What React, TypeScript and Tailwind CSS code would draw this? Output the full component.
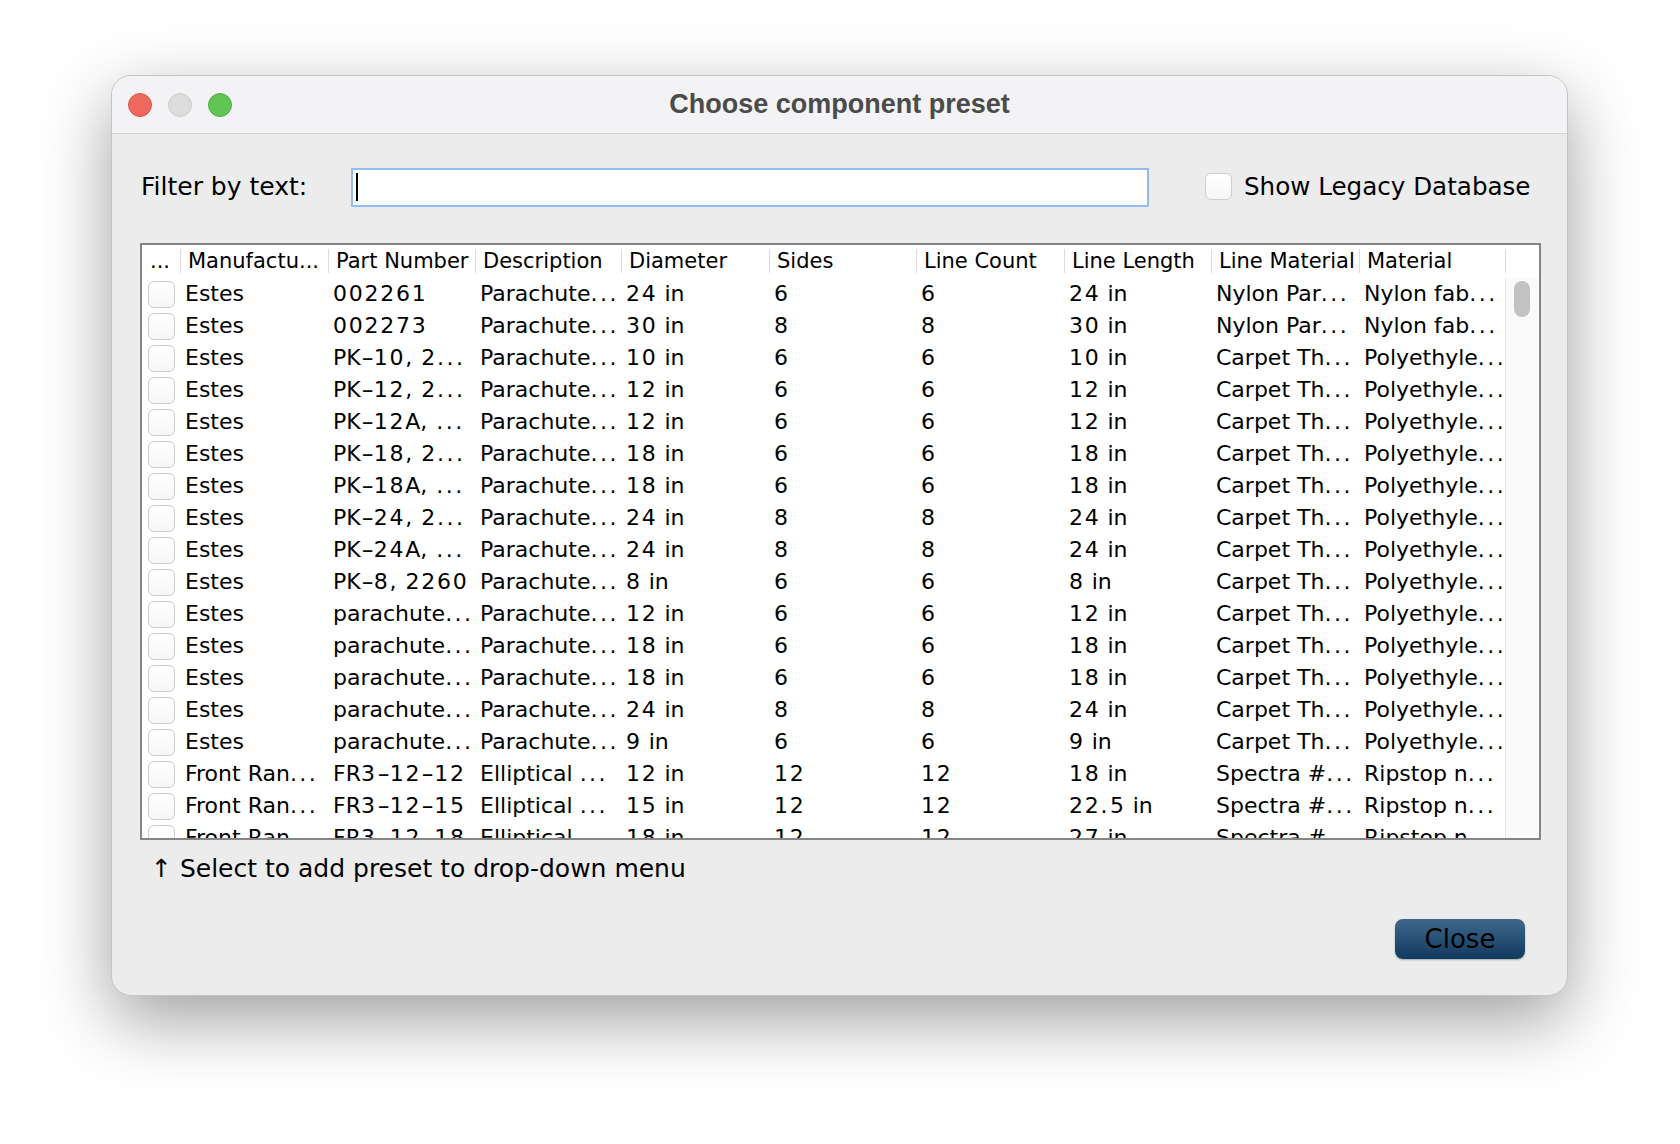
const COLS = [38, 148, 147, 146, 148, 147, 148, 147, 148, 146];

const HEADERS = ['...', 'Manufactu...', 'Part Number', 'Description', 'Diameter', 'Sides', 'Line Count', 'Line Length', 'Line Material', 'Material'];

type Row = string[];

const estes = (pn: string, d: string, s: string, len: string, mat = ['Carpet Th...', 'Polyethyle...']): Row => [
    'Estes', pn, 'Parachute...', d, s, s, len, mat[0], mat[1],
];

const front = (pn: string, d: string, len: string): Row => [
    'Front Ran...', pn, 'Elliptical ...', d, '12', '12', len, 'Spectra #...', 'Ripstop n...',
];

const ROWS: Row[] = [
    estes('002261', '24 in', '6', '24 in', ['Nylon Par...', 'Nylon fab...']),
    estes('002273', '30 in', '8', '30 in', ['Nylon Par...', 'Nylon fab...']),
    estes('PK-10, 2...', '10 in', '6', '10 in'),
    estes('PK-12, 2...', '12 in', '6', '12 in'),
    estes('PK-12A, ...', '12 in', '6', '12 in'),
    estes('PK-18, 2...', '18 in', '6', '18 in'),
    estes('PK-18A, ...', '18 in', '6', '18 in'),
    estes('PK-24, 2...', '24 in', '8', '24 in'),
    estes('PK-24A, ...', '24 in', '8', '24 in'),
    estes('PK-8, 2260', '8 in', '6', '8 in'),
    estes('parachute...', '12 in', '6', '12 in'),
    estes('parachute...', '18 in', '6', '18 in'),
    estes('parachute...', '18 in', '6', '18 in'),
    estes('parachute...', '24 in', '8', '24 in'),
    estes('parachute...', '9 in', '6', '9 in'),
    front('FR3-12-12', '12 in', '18 in'),
    front('FR3-12-15', '15 in', '22.5 in'),
    front('FR3-12-18', '18 in', '27 in'),
];

// the mac font sets digits, dots and dashes wider than DejaVu does
const Cell = ({ text }: { text: string }) => (
    <>
        {text
            .split(/([0-9]+|\.+|-|,)/)
            .filter(Boolean)
            .map((p, i) => {
                if (/^[0-9]+$/.test(p)) return <span key={i} className="tracking-[1.75px]">{p}</span>;
                if (/^\.+$/.test(p)) return <span key={i} className="tracking-[2.5px]">{p}</span>;
                if (p === '-') return <span key={i} className="inline-block w-[13px] text-center scale-x-[1.6]">{p}</span>;
                if (p === ',') return <span key={i} className="tracking-[2px]">{p}</span>;
                return <span key={i}>{p}</span>;
            })}
    </>
);

const Checkbox = () => (
    <div className="w-[27px] h-[27px] rounded-[6px] border border-[#cdcdcd] bg-gradient-to-b from-white to-[#f6f6f6] shrink-0" />
);

const TrafficLights = () => (
    <div className="flex items-center gap-[16px] pl-[16px]">
        <div className="w-[24px] h-[24px] rounded-full bg-[#ee6a5f] border border-[#d95a50]" />
        <div className="w-[24px] h-[24px] rounded-full bg-[#dcdcdc] border border-[#cbcbcb]" />
        <div className="w-[24px] h-[24px] rounded-full bg-[#61c554] border border-[#52ad46]" />
    </div>
);

const TableHeader = () => (
    <div className="flex h-[33px] bg-white shrink-0 text-[21px]">
        {HEADERS.map((h, i) => (
            <div key={i} className="flex items-center h-full shrink-0" style={{ width: COLS[i] }}>
                {i > 0 && <div className="w-px h-[24px] bg-[#dcdcdc] mt-[-2px]" />}
                <span className={`${i === 0 ? 'pl-[8px]' : 'pl-[7px]'} whitespace-nowrap`}>{h}</span>
            </div>
        ))}
        <div className="flex items-center flex-1">
            <div className="w-px h-[24px] bg-[#dcdcdc] mt-[-2px]" />
        </div>
    </div>
);

const TableRow = ({ row }: { row: Row }) => (
    <div className="flex h-[32px] items-center shrink-0 text-[22px]">
        <div className="flex items-center pl-[6px] shrink-0" style={{ width: COLS[0] }}>
            <Checkbox />
        </div>
        {row.map((c, i) => (
            <div key={i} className="pl-[5px] whitespace-nowrap shrink-0 leading-[32px]" style={{ width: COLS[i + 1] }}>
                <Cell text={c} />
            </div>
        ))}
    </div>
);

export default function App() {
    return (
        <div className="min-h-[1144px] w-[1680px] bg-white pt-[75px] pl-[111px]" style={{ fontFamily: '"DejaVu Sans", sans-serif' }}>
            <div className="w-[1457px] h-[921px] rounded-[20px] bg-[#ececec] overflow-hidden flex flex-col border border-[#c4c4c4] shadow-[0_24px_70px_rgba(0,0,0,0.38)]">
                {/* title bar */}
                <div className="relative h-[58px] shrink-0 bg-[#f3f3f5] border-b border-[#d2d2d2] flex items-center">
                    <TrafficLights />
                    <div className="absolute inset-0 flex items-center justify-center text-[27px] font-bold text-[#4b4b4b]" style={{ fontFamily: '"Liberation Sans", Arial, sans-serif' }}>
                        Choose component preset
                    </div>
                </div>

                {/* body */}
                <div className="flex-1 flex flex-col px-[28px] pt-[33px] text-black">
                    <div className="flex items-center h-[40px] text-[25px]">
                        <span className="w-[211px] pl-[1px] shrink-0">Filter by text:</span>
                        <div className="w-[798px] h-[39px] bg-white border-2 border-[#93bdf2] flex items-center pl-[3px] shrink-0">
                            <div className="w-[2px] h-[28px] bg-black" />
                        </div>
                        <div className="flex items-center ml-[56px] gap-[12px]">
                            <Checkbox />
                            <span className="whitespace-nowrap text-[24.6px]">Show Legacy Database</span>
                        </div>
                    </div>

                    <div className="mt-[36px] w-[1401px] h-[597px] border-2 border-[#858585] bg-white flex flex-col overflow-hidden">
                        <TableHeader />
                        <div className="flex flex-1 overflow-hidden">
                            <div className="flex flex-col overflow-hidden w-[1363px] shrink-0">
                                {ROWS.map((r, i) => (
                                    <TableRow key={i} row={r} />
                                ))}
                            </div>
                            <div className="flex-1 bg-[#fafafa] border-l border-[#e6e6e6] pt-[3px] pl-[8px]">
                                <div className="w-[16px] h-[36px] rounded-full bg-[#c2c2c2]" />
                            </div>
                        </div>
                    </div>

                    <div className="mt-[14px] pl-[11px] text-[25px] leading-[30px]">↑ Select to add preset to drop-down menu</div>

                    <div className="flex justify-end mt-[35px] pr-[14px]">
                        <button className="w-[130px] h-[40px] rounded-[8px] bg-gradient-to-b from-[#3f678b] to-[#113a5f] text-[26px] text-black flex items-center justify-center shadow-[0_1px_2px_rgba(0,0,0,0.3)]">
                            Close
                        </button>
                    </div>
                </div>
            </div>
        </div>
    );
}
